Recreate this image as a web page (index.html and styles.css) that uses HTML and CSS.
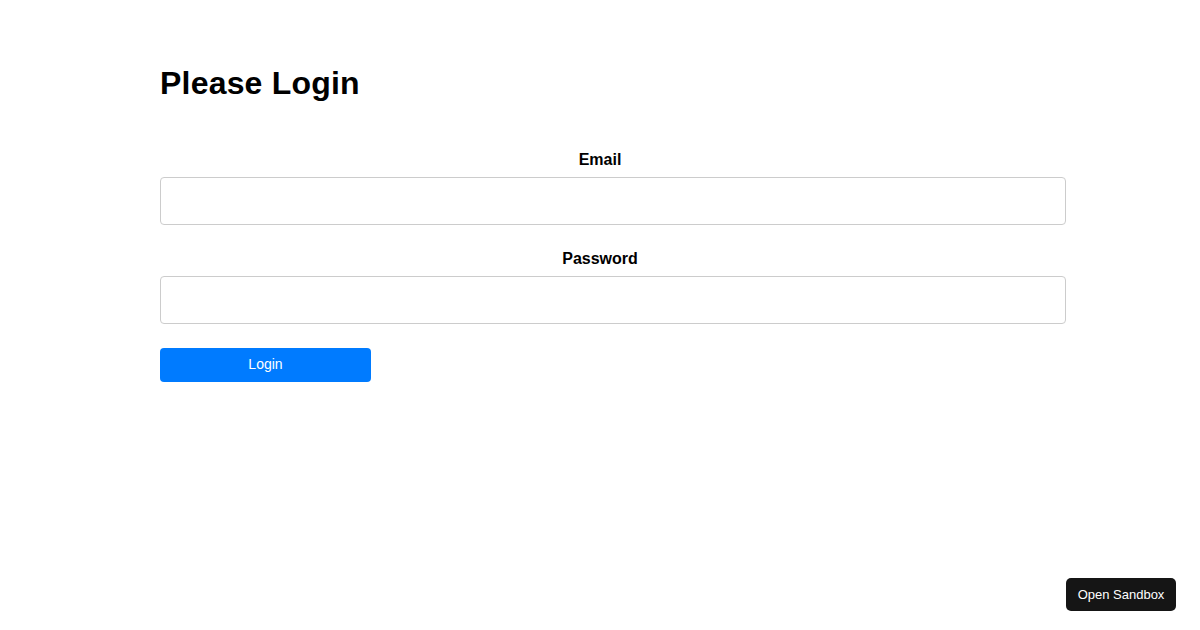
FILE: index.html
```html
<!DOCTYPE html>
<html lang="en">
<head>
<meta charset="utf-8">
<title>Please Login</title>
<link rel="stylesheet" href="styles.css">
</head>
<body>
<main class="container">
  <h1 class="title">Please Login</h1>
  <form class="login-form">
    <div class="form-group">
      <label class="form-label" for="email">Email</label>
      <input class="form-input" type="email" id="email">
    </div>
    <div class="form-group">
      <label class="form-label" for="password">Password</label>
      <input class="form-input" type="password" id="password">
    </div>
    <button class="login-btn" type="button">Login</button>
  </form>
</main>
<a class="sandbox-btn" href="#">Open Sandbox</a>
</body>
</html>
```

FILE: styles.css
```css
html, body {
  margin: 0;
  padding: 0;
  background: #ffffff;
}

body {
  font-family: "Liberation Sans", Arial, sans-serif;
  color: #000;
}

.container {
  width: 880px;
  margin: 0 auto;
  padding-top: 65px;
}

.title {
  margin: 0 0 48px;
  font-size: 32px;
  line-height: 37px;
  font-weight: bold;
  letter-spacing: 0.2px;
}

.form-group {
  margin-bottom: 24px;
}

.form-label {
  display: block;
  text-align: center;
  font-size: 16px;
  font-weight: bold;
  line-height: 20px;
  margin-bottom: 7px;
}

.form-input {
  display: block;
  box-sizing: content-box;
  width: 100%;
  height: 22px;
  padding: 12px;
  margin: 0;
  border: 1px solid #cccccc;
  border-radius: 4px;
  font-family: inherit;
  font-size: 16px;
  background: #fff;
  outline: none;
}

.login-btn {
  display: block;
  box-sizing: border-box;
  width: 211px;
  height: 34px;
  padding: 0 0 2px;
  border: none;
  border-radius: 4px;
  background: #007bff;
  color: #ffffff;
  font-family: inherit;
  font-size: 14px;
  cursor: pointer;
}

.sandbox-btn {
  position: fixed;
  right: 24px;
  bottom: 19px;
  width: 110px;
  height: 33px;
  display: flex;
  align-items: center;
  justify-content: center;
  box-sizing: border-box;
  background: #151515;
  color: #ffffff;
  border-radius: 5px;
  font-size: 13px;
  text-decoration: none;
}
```
